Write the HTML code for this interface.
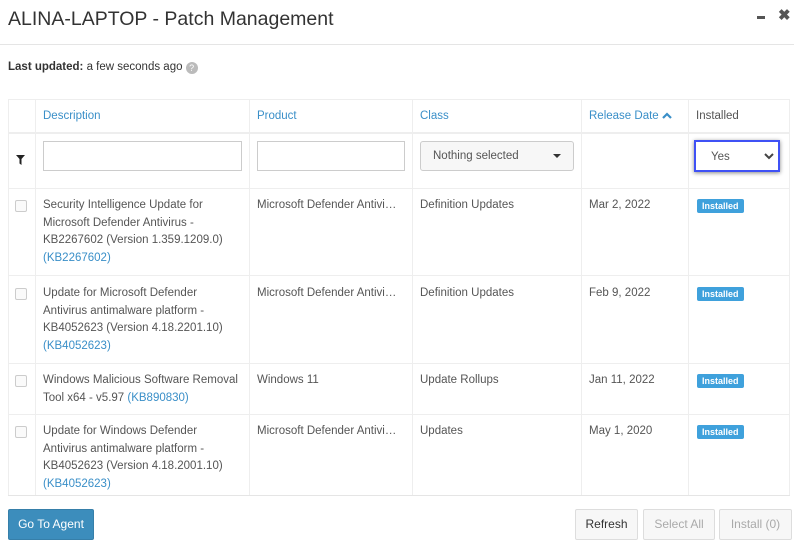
<html><head><style>
body{margin:0;width:794px;height:549px;background:#fff;font-family:"Liberation Sans",sans-serif;color:#555;position:relative;overflow:hidden;font-size:11.5px}
.a{position:absolute}
.t{font-size:19.5px;color:#333;left:8px;top:8px}
.hl{left:0;width:794px;height:1px;background:#e5e5e5}
.vl{width:1px;background:#eee;top:99px;height:396px}
.rl{left:8px;width:782px;height:1px;background:#eee}
.h{top:110px;color:#3a8fc8}
.c{line-height:17.5px}
.cb{width:10px;height:10px;border:1px solid #ccc;border-radius:2px;left:15px;background:#fafafa}
.b{background:#3fa1dc;color:#fff;font-weight:bold;font-size:9px;padding:2px 5px;border-radius:2px;left:697px}
.lk{color:#3a8fc8}
.in{border:1px solid #ccc;height:28px;top:141px}
.btn{border:1px solid #ddd;border-radius:2px;background:#f7f7f7;top:509px;height:29px;line-height:29px;text-align:center;font-size:12px}
</style></head><body>
<div class="a t">ALINA-LAPTOP - Patch Management</div>
<div class="a" style="left:757px;top:16px;width:8px;height:3px;background:#555"></div>
<div class="a" style="left:778px;top:6px;font-size:15px;color:#555;font-weight:bold">✖</div>
<div class="a hl" style="top:44px"></div>
<div class="a" style="left:8px;top:61px;font-size:11.5px;color:#333"><b>Last updated:</b> a few seconds ago <span style="display:inline-block;width:12px;height:12px;border-radius:6px;background:#bbb;color:#fff;font-size:9px;text-align:center;line-height:12px;vertical-align:-1px">?</span></div>
<div class="a rl" style="top:99px"></div>
<div class="a rl" style="top:132px;height:2px"></div>
<div class="a rl" style="top:188px"></div>
<div class="a rl" style="top:275px"></div>
<div class="a rl" style="top:363px"></div>
<div class="a rl" style="top:414px"></div>
<div class="a rl" style="top:495px;background:#e5e5e5"></div>
<div class="a vl" style="left:8px"></div>
<div class="a vl" style="left:35px"></div>
<div class="a vl" style="left:249px"></div>
<div class="a vl" style="left:412px"></div>
<div class="a vl" style="left:581px"></div>
<div class="a vl" style="left:688px"></div>
<div class="a vl" style="left:789px"></div>
<div class="a h" style="left:43px">Description</div>
<div class="a h" style="left:257px">Product</div>
<div class="a h" style="left:420px">Class</div>
<div class="a h" style="left:589px">Release Date <svg width="10" height="8" style="vertical-align:0"><path d="M1 7L5 3L9 7" stroke="#3a8fc8" stroke-width="2.2" fill="none"/></svg></div>
<div class="a h" style="left:696px;color:#555">Installed</div>
<svg class="a" style="left:16px;top:155px" width="9" height="10"><path d="M0 0H9L5.5 4V10L3.5 8.5V4Z" fill="#222"/></svg>
<div class="a in" style="left:43px;width:197px"></div>
<div class="a in" style="left:257px;width:146px"></div>
<div class="a in" style="left:420px;width:152px;background:#f7f7f7;border-radius:3px;line-height:28px"><span style="margin-left:12px">Nothing selected</span><span style="position:absolute;right:12px;top:12px;border:4px solid transparent;border-top-color:#333;border-bottom:0"></span></div>
<div class="a" style="left:694px;top:140px;width:82px;height:28px;border:2px solid #3f51f5;box-shadow:0 1px 4px #888;line-height:30px"><span style="margin-left:15px">Yes</span><svg style="position:absolute;right:4px;top:11px" width="10" height="7"><path d="M1 1L5 5L9 1" stroke="#444" stroke-width="2" fill="none"/></svg></div>
<div class="a cb" style="top:200px"></div>
<div class="a c" style="left:43px;top:197px">Security Intelligence Update for<br>Microsoft Defender Antivirus -<br>KB2267602 (Version 1.359.1209.0)<br><span class="lk">(KB2267602)</span></div>
<div class="a c" style="left:257px;top:197px">Microsoft Defender Antivi…</div>
<div class="a c" style="left:420px;top:197px">Definition Updates</div>
<div class="a c" style="left:589px;top:197px">Mar 2, 2022</div>
<div class="a b" style="top:199px">Installed</div>
<div class="a cb" style="top:288px"></div>
<div class="a c" style="left:43px;top:285px">Update for Microsoft Defender<br>Antivirus antimalware platform -<br>KB4052623 (Version 4.18.2201.10)<br><span class="lk">(KB4052623)</span></div>
<div class="a c" style="left:257px;top:285px">Microsoft Defender Antivi…</div>
<div class="a c" style="left:420px;top:285px">Definition Updates</div>
<div class="a c" style="left:589px;top:285px">Feb 9, 2022</div>
<div class="a b" style="top:287px">Installed</div>
<div class="a cb" style="top:375px"></div>
<div class="a c" style="left:43px;top:372px">Windows Malicious Software Removal<br>Tool x64 - v5.97 <span class="lk">(KB890830)</span></div>
<div class="a c" style="left:257px;top:372px">Windows 11</div>
<div class="a c" style="left:420px;top:372px">Update Rollups</div>
<div class="a c" style="left:589px;top:372px">Jan 11, 2022</div>
<div class="a b" style="top:374px">Installed</div>
<div class="a cb" style="top:426px"></div>
<div class="a c" style="left:43px;top:423px">Update for Windows Defender<br>Antivirus antimalware platform -<br>KB4052623 (Version 4.18.2001.10)<br><span class="lk">(KB4052623)</span></div>
<div class="a c" style="left:257px;top:423px">Microsoft Defender Antivi…</div>
<div class="a c" style="left:420px;top:423px">Updates</div>
<div class="a c" style="left:589px;top:423px">May 1, 2020</div>
<div class="a b" style="top:425px">Installed</div>
<div class="a btn" style="left:8px;width:84px;background:#3c8dbc;border-color:#367fa9;color:#fff">Go To Agent</div>
<div class="a btn" style="left:575px;width:61px;color:#333">Refresh</div>
<div class="a btn" style="left:643px;width:70px;color:#aaa">Select All</div>
<div class="a btn" style="left:719px;width:71px;color:#aaa">Install (0)</div>
</body></html>
